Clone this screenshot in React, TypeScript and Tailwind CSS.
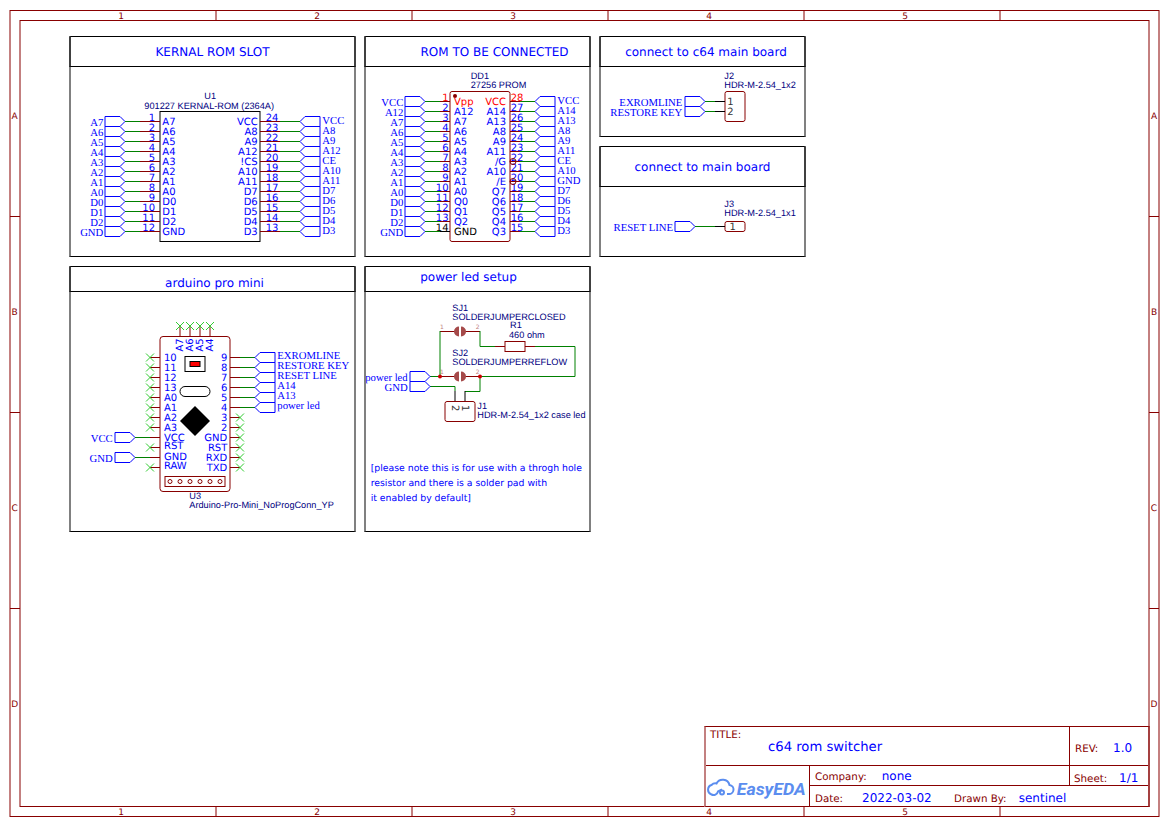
import type { ReactNode } from "react";

const net = "font-['Liberation_Serif',serif] text-[10.7px] fill-[#0000ff]";
const pin = "font-['DejaVu_Sans',sans-serif] text-[10px] fill-[#0000ff]";
const ref = "font-['Liberation_Sans',sans-serif] text-[9.2px] fill-[#000080]";
const DARK = "#880000";
const GREEN = "#008000";

const U1_L = ["A7", "A6", "A5", "A4", "A3", "A2", "A1", "A0", "D0", "D1", "D2", "GND"];
const U1_R = ["VCC", "A8", "A9", "A12", "!CS", "A10", "A11", "D7", "D6", "D5", "D4", "D3"];
const U1_N = ["VCC", "A8", "A9", "A12", "CE", "A10", "A11", "D7", "D6", "D5", "D4", "D3"];
const DD_NL = ["VCC", "A12", "A7", "A6", "A5", "A4", "A3", "A2", "A1", "A0", "D0", "D1", "D2", "GND"];
const DD_L = ["Vpp", "A12", "A7", "A6", "A5", "A4", "A3", "A2", "A1", "A0", "Q0", "Q1", "Q2", "GND"];
const DD_R = ["VCC", "A14", "A13", "A8", "A9", "A11", "/G", "A10", "/E", "Q7", "Q6", "Q5", "Q4", "Q3"];
const DD_NR = ["VCC", "A14", "A13", "A8", "A9", "A11", "CE", "A10", "GND", "D7", "D6", "D5", "D4", "D3"];

// flag pointing right, x is the flat end
function FlagR({ x, y }: { x: number; y: number }) {
  return <polygon points={`${x},${y - 5} ${x + 15},${y - 5} ${x + 20},${y} ${x + 15},${y + 5} ${x},${y + 5}`} fill="none" stroke="#0000ff" />;
}

// flag pointing left, x is the tip
function FlagL({ x, y }: { x: number; y: number }) {
  return <polygon points={`${x},${y} ${x + 5},${y - 5} ${x + 20},${y - 5} ${x + 20},${y + 5} ${x + 5},${y + 5}`} fill="none" stroke="#0000ff" />;
}

function Line({ d, c = DARK }: { d: string; c?: string }) {
  return <path d={d} fill="none" stroke={c} />;
}

function Cross({ x, y }: { x: number; y: number }) {
  return <path d={`M${x - 4} ${y - 4}L${x + 4} ${y + 4}M${x + 4} ${y - 4}L${x - 4} ${y + 4}`} stroke="#33cc33" fill="none" />;
}

function Panel({ className, headClass, title, box, children }: { className: string; headClass: string; title: string; box: number[]; children: ReactNode }) {
  return (
    <div className={`flex flex-col border-x-2 border-y border-x-[#808080] border-y-black ${className}`}>
      <div className={`-mx-[2px] flex items-center justify-center border-x-2 border-b border-x-[#404040] border-b-black text-[12px] leading-[14px] text-[#0000ff] ${headClass}`}>
        {title}
      </div>
      <svg width={box[2]} height={box[3]} viewBox={box.join(" ")} className="block">
        {children}
      </svg>
    </div>
  );
}

function SheetFrame() {
  const cols = [216, 412, 608, 804, 1000];
  const rows = [216.5, 412.5, 608.5];
  return (
    <svg width={1169} height={827} className="absolute inset-0 font-['DejaVu_Sans',sans-serif] text-[9px]">
      <Line d="M10 10.5H1159M10 816.5H1159M20 20.5H1149M20 806.5H1149M10 10V817M1159 10V817M20 20V807M1149 20V807" />
      {cols.map((x) => (
        <Line key={x} d={`M${x} 10V20M${x} 806V816`} />
      ))}
      {rows.map((y) => (
        <Line key={y} d={`M10 ${y}H20M1149 ${y}H1159`} />
      ))}
      {[1, 2, 3, 4, 5].map((n, i) => (
        <g key={n} className="fill-[#880000]" textAnchor="middle">
          <text x={121 + i * 196} y={18.5}>{n}</text>
          <text x={121 + i * 196} y={815}>{n}</text>
        </g>
      ))}
      {["A", "B", "C", "D"].map((l, i) => (
        <g key={l} className="fill-[#880000]" textAnchor="middle">
          <text x={14.7} y={118.7 + i * 196}>{l}</text>
          <text x={1154} y={118.7 + i * 196}>{l}</text>
        </g>
      ))}
    </svg>
  );
}

function KernalSlot() {
  return (
    <>
      <text x={204.3} y={99} className={ref}>U1</text>
      <text x={144.3} y={109} className={ref}>901227 KERNAL-ROM (2364A)</text>
      <rect x={160} y={111.5} width={100} height={130} fill="none" stroke="#000" />
      {U1_L.map((name, i) => {
        const y = 121.5 + i * 10;
        return (
          <g key={i}>
            <FlagR x={105} y={y} />
            <Line d={`M125 ${y}H140`} c={GREEN} />
            <Line d={`M140 ${y}H160`} />
            <text x={103.3} y={y + 4.5} textAnchor="end" className={net}>{name}</text>
            <text x={155} y={y - 0.5} textAnchor="end" className={pin}>{i + 1}</text>
            <text x={162.3} y={y + 3.5} className={pin}>{name}</text>
          </g>
        );
      })}
      {U1_R.map((name, i) => {
        const y = 121.5 + i * 10;
        return (
          <g key={i}>
            <FlagL x={300} y={y} />
            <Line d={`M280 ${y}H300`} c={GREEN} />
            <Line d={`M260 ${y}H280`} />
            <text x={322.3} y={y + 2.5} className={net}>{U1_N[i]}</text>
            <text x={265.7} y={y - 0.5} className={pin}>{24 - i}</text>
            <text x={257.7} y={y + 3.5} textAnchor="end" className={pin}>{name}</text>
          </g>
        );
      })}
    </>
  );
}

function RomConnected() {
  return (
    <>
      <text x={470.7} y={79.3} className={ref}>DD1</text>
      <text x={470.7} y={88.3} className={ref}>27256 PROM</text>
      <rect x={450} y={91.5} width={60} height={150} rx={2} fill="none" stroke={DARK} />
      <circle cx={455} cy={96} r={2} fill={DARK} />
      {DD_L.map((name, i) => {
        const y = 101.5 + i * 10;
        const hot = i === 0;
        const gnd = i === 13;
        return (
          <g key={i}>
            <FlagR x={405} y={y} />
            <Line d={`M425 ${y}H440`} c={GREEN} />
            <Line d={`M440 ${y}H450`} c={gnd ? "#000" : DARK} />
            <text x={403.3} y={y + 4.5} textAnchor="end" className={net}>{DD_NL[i]}</text>
            <text x={448.5} y={y - 0.5} textAnchor="end" className={hot ? `${pin} fill-[#ff0000]` : gnd ? `${pin} fill-[#000000]` : pin}>{i + 1}</text>
            <text x={454} y={y + 3.5} className={hot ? `${pin} fill-[#ff0000]` : gnd ? `${pin} fill-[#000000]` : pin}>{name}</text>
          </g>
        );
      })}
      {DD_R.map((name, i) => {
        const y = 101.5 + i * 10;
        const hot = i === 0;
        return (
          <g key={i}>
            <FlagL x={535} y={y} />
            <Line d={`M520 ${y}H535`} c={GREEN} />
            <Line d={`M510 ${y}H520`} />
            <text x={557.3} y={y + 2.5} className={net}>{DD_NR[i]}</text>
            <text x={510.7} y={y - 0.5} className={hot ? `${pin} fill-[#ff0000]` : pin}>{28 - i}</text>
            <text x={506} y={y + 3.5} textAnchor="end" className={hot ? `${pin} fill-[#ff0000]` : pin}>{name}</text>
          </g>
        );
      })}
      <circle cx={513} cy={161.5} r={3} fill="none" stroke={DARK} />
      <circle cx={513} cy={181.5} r={3} fill="none" stroke={DARK} />
    </>
  );
}

function MainBoardTwo() {
  return (
    <>
      <text x={724.3} y={79.3} className={ref}>J2</text>
      <text x={724.3} y={88.3} className={ref}>HDR-M-2.54_1x2</text>
      <rect x={725} y={91.5} width={20} height={30} rx={2} fill="none" stroke={DARK} />
      {["EXROMLINE", "RESTORE KEY"].map((name, i) => {
        const y = 101.5 + i * 10;
        return (
          <g key={i}>
            <FlagR x={685} y={y} />
            <Line d={`M705 ${y}H715`} c={GREEN} />
            <Line d={`M715 ${y}H725`} c="#000" />
            <text x={682.3} y={y + 4.5} textAnchor="end" className={net}>{name}</text>
            <text x={727.3} y={y + 3.5} className={`${pin} fill-[#333333]`}>{i + 1}</text>
          </g>
        );
      })}
    </>
  );
}

function MainBoardOne() {
  return (
    <>
      <text x={724.3} y={206.7} className={ref}>J3</text>
      <text x={724.3} y={216} className={ref}>HDR-M-2.54_1x1</text>
      <rect x={725} y={221.5} width={20} height={10} rx={2} fill="none" stroke={DARK} />
      <FlagR x={675} y={226.5} />
      <Line d="M695 226.5H715" c={GREEN} />
      <Line d="M715 226.5H725" c="#000" />
      <text x={673} y={231} textAnchor="end" className={net}>RESET LINE</text>
      <text x={732.7} y={230} textAnchor="middle" className={`${pin} fill-[#333333]`}>1</text>
    </>
  );
}

function ArduinoMini() {
  const left = [
    ["10", 360.5], ["11", 370.5], ["12", 380.5], ["13", 390.5], ["A0", 400.5], ["A1", 410.5], ["A2", 420.5], ["A3", 430.5],
    ["VCC", 440.5], ["RST", 448.5], ["GND", 460], ["RAW", 469],
  ] as const;
  const right = ["9", "8", "7", "6", "5", "4", "3", "2", "GND", "RST", "RXD", "TXD"];
  const nets = ["EXROMLINE", "RESTORE KEY", "RESET LINE", "A14", "A13", "power led"];
  return (
    <>
      <rect x={160} y={336.5} width={70} height={155} rx={3} fill="none" stroke={DARK} />
      {["A7", "A6", "A5", "A4"].map((name, i) => {
        const x = 180 + i * 10;
        return (
          <g key={name}>
            <Line d={`M${x} 326V336`} />
            <Cross x={x} y={326} />
            <text transform={`translate(${x + 3} 351.5) rotate(-90)`} className={pin}>{name}</text>
          </g>
        );
      })}
      {left.map(([name, base], i) => {
        const y = 357.5 + i * 10;
        return (
          <g key={name}>
            <Line d={`M150 ${y}H160`} />
            {i !== 8 && i !== 10 && <Cross x={150} y={y} />}
            <text x={164} y={base} className={pin}>{name}</text>
          </g>
        );
      })}
      <FlagR x={115} y={437.5} />
      <Line d="M135 437.5H150" c={GREEN} />
      <text x={112.7} y={441.5} textAnchor="end" className={net}>VCC</text>
      <FlagR x={115} y={457.5} />
      <Line d="M135 457.5H150" c={GREEN} />
      <text x={112.7} y={461.5} textAnchor="end" className={net}>GND</text>
      {right.map((name, i) => {
        const y = 357.5 + i * 10;
        return (
          <g key={i}>
            <Line d={`M230 ${y}H240`} />
            <text x={227.3} y={y + 3} textAnchor="end" className={pin}>{name}</text>
            {i < 6 ? (
              <>
                <Line d={`M240 ${y}H255`} c={GREEN} />
                <FlagL x={255} y={y} />
                <text x={277.3} y={y + 1.5} className={net}>{nets[i]}</text>
              </>
            ) : (
              <Cross x={240} y={y} />
            )}
          </g>
        );
      })}
      <rect x={185} y={356.5} width={20} height={15} fill="none" stroke="#000" />
      <rect x={190} y={361.5} width={10} height={5} fill="#ff0000" stroke="#000" />
      <rect x={180} y={386.5} width={30} height={10} rx={5} fill="none" stroke="#000" />
      <polygon points="195,406 210,421 195,436 180,421" fill="#000" />
      <rect x={165} y={476.5} width={60} height={10} fill="none" stroke={DARK} />
      {[170, 180, 190, 200, 210, 220].map((x) => (
        <circle key={x} cx={x} cy={481.5} r={2} fill="none" stroke={DARK} />
      ))}
      <text x={189.3} y={498.7} className={ref}>U3</text>
      <text x={189.3} y={508} className={ref}>Arduino-Pro-Mini_NoProgConn_YP</text>
    </>
  );
}

function SolderJumper({ y }: { y: number }) {
  return (
    <>
      <Line d={`M440 ${y}H455M465 ${y}H480`} />
      <path d={`M459 ${y - 5}a5 5 0 0 0 0 10z`} fill="#a54a4a" />
      <path d={`M461 ${y - 5}a5 5 0 0 1 0 10z`} fill="#a54a4a" />
      <text x={442} y={y - 2.5} textAnchor="middle" className="font-['DejaVu_Sans',sans-serif] text-[6px] fill-[#c08080]">1</text>
      <text x={477.7} y={y - 2.5} textAnchor="middle" className="font-['DejaVu_Sans',sans-serif] text-[6px] fill-[#c08080]">2</text>
    </>
  );
}

function PowerLed() {
  const note = "font-['DejaVu_Sans',sans-serif] text-[9.3px] fill-[#0000ff]";
  return (
    <>
      <text x={452.3} y={311.3} className={ref}>SJ1</text>
      <text x={452.3} y={320.3} className={ref}>SOLDERJUMPERCLOSED</text>
      <text x={452.3} y={356.3} className={ref}>SJ2</text>
      <text x={452.3} y={365.3} className={ref}>SOLDERJUMPERREFLOW</text>
      <text x={510} y={328} className={ref}>R1</text>
      <text x={509} y={338} className={ref}>460 ohm</text>
      <text x={477.3} y={408.7} className={ref}>J1</text>
      <text x={477.3} y={417.7} className={ref}>HDR-M-2.54_1x2 case led</text>
      <SolderJumper y={331.5} />
      <SolderJumper y={376.5} />
      <Line d="M440 331V376.5M480 331V346.5H495M535 346.5H575V376.5H480M480 376.5V391.5H465M430 376.5H440M430 386.5H455V391" c={GREEN} />
      <Line d="M495 346.5H505M525 346.5H535" />
      <rect x={505} y={341.5} width={20} height={10} fill="none" stroke={DARK} />
      <circle cx={440} cy={376.5} r={2} fill="#cc0000" />
      <circle cx={480} cy={376.5} r={2} fill="#cc0000" />
      <FlagR x={410} y={376.5} />
      <FlagR x={410} y={386.5} />
      <text x={407.7} y={381.3} textAnchor="end" className={net}>power led</text>
      <text x={407.7} y={391} textAnchor="end" className={net}>GND</text>
      <Line d="M455 391V401M465 391V401" c="#000" />
      <rect x={445} y={401.5} width={30} height={20} rx={2} fill="none" stroke={DARK} />
      <text transform="translate(452 405) rotate(90)" className={`${pin} fill-[#333333]`}>2</text>
      <text transform="translate(462 405) rotate(90)" className={`${pin} fill-[#333333]`}>1</text>
      <text x={370.7} y={471.3} className={note}>[please note this is for use with a throgh hole</text>
      <text x={370.7} y={486.3} className={note}>resistor and there is a solder pad with</text>
      <text x={370.7} y={501.3} className={note}>it enabled by default]</text>
    </>
  );
}

function EasyLogo() {
  return (
    <svg width={103} height={40} viewBox="706 766 103 40" className="block">
      <g fill="none" stroke="#5b8def" strokeWidth={2}>
        <path d="M727 794h1.5a4.5 4.5 0 0 0 1-9a7 7 0 0 0-13-1.5a5.5 5.5 0 0 0-5 1.5a5 5 0 0 0 0 9.5a4.6 4.6 0 0 0 6.5-3l4-2" />
        <circle cx={722} cy={792.5} r={2} />
      </g>
      <text x={736.7} y={795} textLength={69} lengthAdjust="spacingAndGlyphs" className="font-['Roboto',sans-serif] text-[17px] font-bold italic fill-[#5b8def]">EasyEDA</text>
    </svg>
  );
}

function TitleBlock() {
  const blue = "text-[12px] leading-[14px] text-[#0000ff]";
  const red = "text-[10.3px] leading-[14px] text-[#880000]";
  return (
    <div className="absolute left-[704px] top-[726px] flex h-[81px] w-[446px] flex-col border-x-2 border-y border-x-[#c38080] border-r-[#a54040] border-y-[#880000] bg-white">
      <div className="flex h-[39px] border-b border-[#880000]">
        <div className="flex w-[363px] flex-col pl-[4px] pt-[2px]">
          <div className="text-[10.3px] leading-[12px] text-[#880000]">TITLE:</div>
          <div className="pl-[58px] text-[13.2px] leading-[14px] text-[#0000ff]">c64 rom switcher</div>
        </div>
        <div className="flex flex-1 items-baseline border-l border-[#880000] pl-[5px] pt-[14px]">
          <span className={`w-[38px] ${red}`}>REV:</span>
          <span className={blue}>1.0</span>
        </div>
      </div>
      <div className="flex flex-1">
        <div className="w-[104px] border-r border-[#880000]">
          <EasyLogo />
        </div>
        <div className="flex flex-1 flex-col">
          <div className="flex h-[20px] border-b border-[#880000]">
            <div className="flex w-[259px] items-baseline pl-[5px] pt-[3px]">
              <span className={`w-[66.7px] ${red}`}>Company:</span>
              <span className={blue}>none</span>
            </div>
            <div className="flex flex-1 items-baseline border-l border-[#880000] pl-[4px] pt-[5px]">
              <span className={`w-[45px] ${red}`}>Sheet:</span>
              <span className={blue}>1/1</span>
            </div>
          </div>
          <div className="flex flex-1 items-baseline pl-[5px] pt-[5px]">
            <span className={`w-[47px] ${red}`}>Date:</span>
            <span className={`w-[92px] ${blue}`}>2022-03-02</span>
            <span className={`w-[64.7px] ${red}`}>Drawn By:</span>
            <span className={blue}>sentinel</span>
          </div>
        </div>
      </div>
    </div>
  );
}

export default function App() {
  return (
    <div className="relative h-[827px] w-[1169px] overflow-hidden bg-white font-['DejaVu_Sans',sans-serif] [text-rendering:geometricPrecision]">
      <SheetFrame />
      <div className="relative flex flex-col gap-[9px] pl-[69px] pt-[36px]">
        <div className="flex gap-[8px]">
          <Panel className="h-[221px] w-[287px]" headClass="h-[30px] pt-[1px]" title="KERNAL ROM SLOT" box={[71, 67, 283, 189]}>
            <KernalSlot />
          </Panel>
          <Panel className="h-[221px] w-[227px]" headClass="h-[30px] pl-[34px] pt-[1px]" title="ROM TO BE CONNECTED" box={[366, 67, 223, 189]}>
            <RomConnected />
          </Panel>
          <div className="flex w-[207px] flex-col gap-[9px]">
            <Panel className="h-[101px]" headClass="h-[30px] pl-[7px] pt-[1px]" title="connect to c64 main board" box={[601, 67, 203, 69]}>
              <MainBoardTwo />
            </Panel>
            <Panel className="h-[111px]" headClass="h-[40px] pt-[1px]" title="connect to main board" box={[601, 187, 203, 69]}>
              <MainBoardOne />
            </Panel>
          </div>
        </div>
        <div className="flex gap-[8px]">
          <Panel className="h-[266px] w-[287px]" headClass="h-[25px] pl-[4px] pt-[7px]" title="arduino pro mini" box={[71, 292, 283, 239]}>
            <ArduinoMini />
          </Panel>
          <Panel className="h-[266px] w-[227px]" headClass="h-[25px] pr-[18px] pb-[4px]" title="power led setup" box={[366, 292, 223, 239]}>
            <PowerLed />
          </Panel>
        </div>
      </div>
      <TitleBlock />
    </div>
  );
}
